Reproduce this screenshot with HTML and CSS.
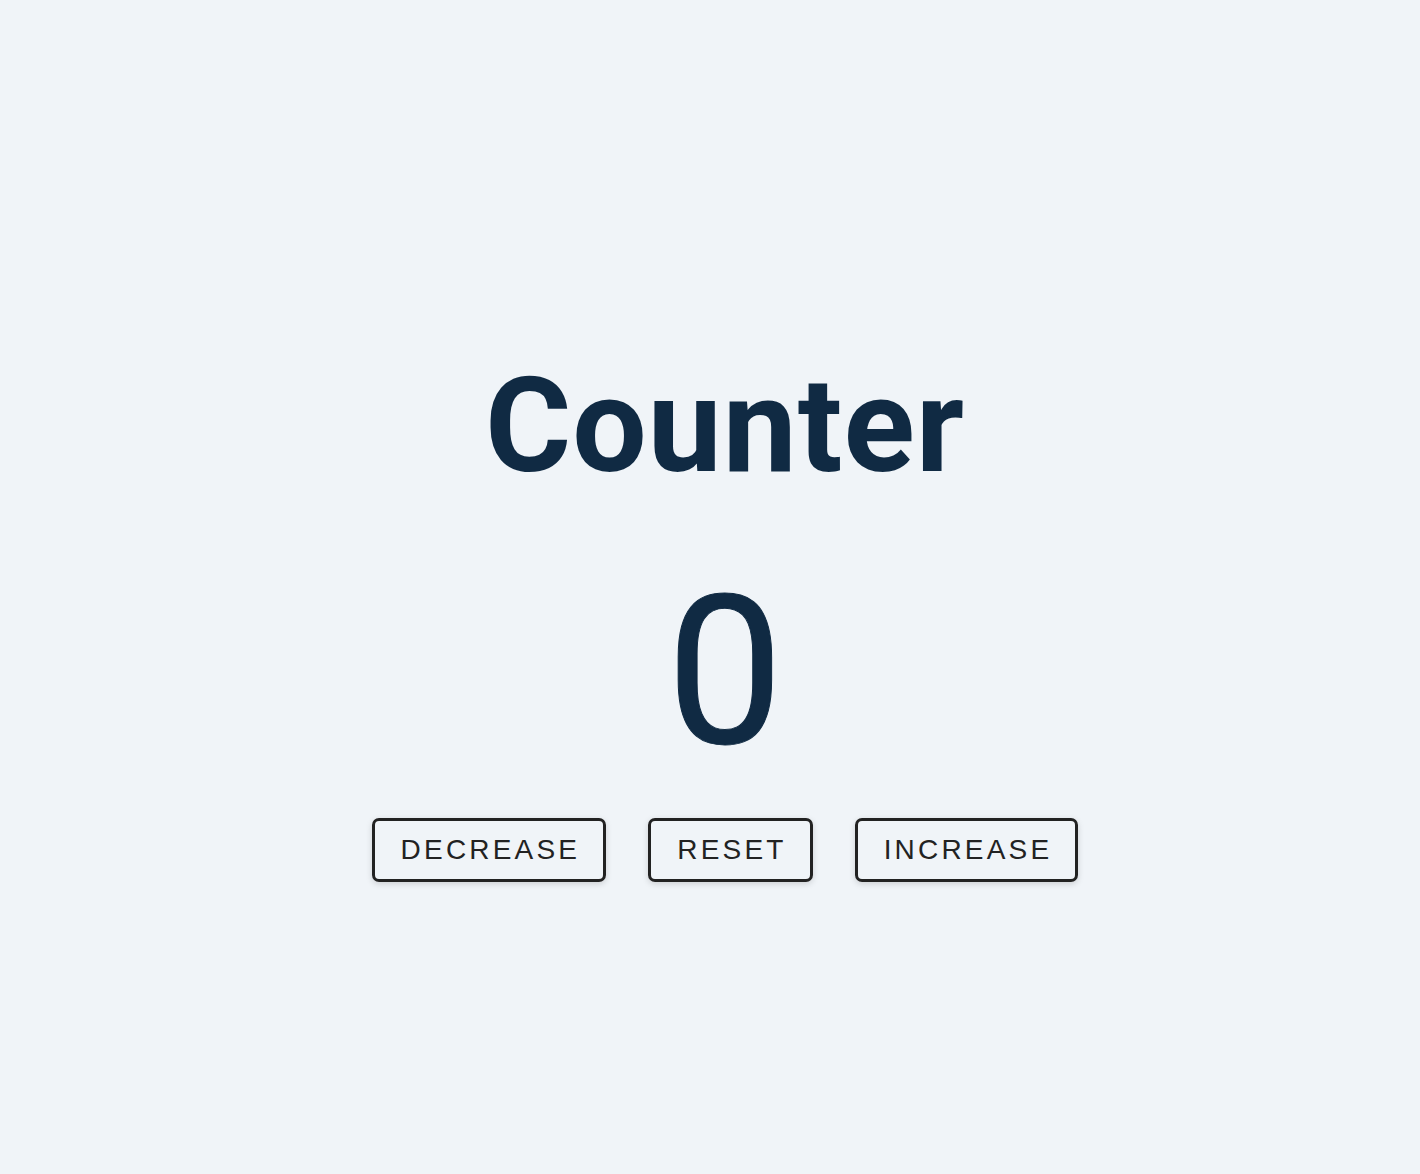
FILE: index.html
```html
<!DOCTYPE html>
<html lang="en">
<head>
<meta charset="utf-8">
<title>Counter</title>
<link rel="stylesheet" href="styles.css">
</head>
<body>
  <main class="counter">
    <h1 class="counter__title">Counter</h1>
    <span class="counter__value">0</span>
    <div class="counter__actions">
      <button class="btn" type="button">decrease</button>
      <button class="btn" type="button">reset</button>
      <button class="btn" type="button">increase</button>
    </div>
  </main>
</body>
</html>
```

FILE: styles.css
```css
* {
  box-sizing: border-box;
}

html,
body {
  margin: 0;
  height: 100%;
}

body {
  background: #f0f4f8;
  color: #102a43;
  font-family: Roboto, "Liberation Sans", sans-serif;
}

.counter {
  min-height: 100vh;
  display: flex;
  flex-direction: column;
  align-items: center;
  justify-content: center;
  padding: 68px 0 0 30px;
  text-align: center;
}

.counter__title {
  margin: 0;
  font-size: 132px;
  font-weight: 700;
  line-height: 1;
  letter-spacing: 1px;
}

.counter__value {
  display: block;
  margin-top: 76px;
  font-size: 208px;
  font-weight: 400;
  line-height: 1;
  -webkit-text-stroke: 1px #102a43;
}

.counter__actions {
  display: flex;
  gap: 42px;
  margin-top: 42px;
}

.btn {
  font-family: "Liberation Sans", Arial, sans-serif;
  font-size: 28px;
  letter-spacing: 3.2px;
  text-transform: uppercase;
  color: #222;
  background: transparent;
  border: 3px solid #222;
  border-radius: 7px;
  padding: 13px 23px 13px 26px;
  box-shadow: 0 2px 6px rgba(0, 0, 0, 0.15);
  cursor: pointer;
}
```
